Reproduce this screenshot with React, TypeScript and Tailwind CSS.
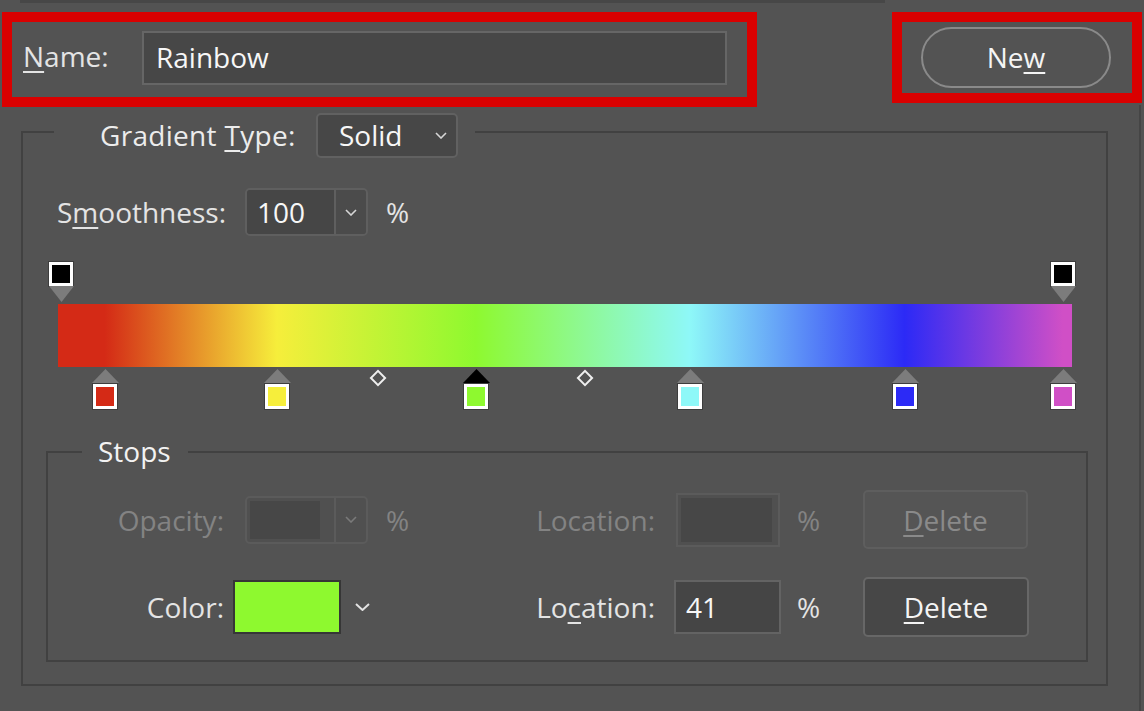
import React from "react";

function Chevron({ w = 12, h = 7, sw = 1.6, color = "#d6d6d6" }: { w?: number; h?: number; sw?: number; color?: string }) {
  return (
    <svg width={w} height={h} viewBox={`0 0 ${w} ${h}`}>
      <polyline points={`1,1 ${w / 2},${h - 1} ${w - 1},1`} fill="none" stroke={color} strokeWidth={sw} />
    </svg>
  );
}

const topStops = [12, 1014];
const bottomStops = [
  { x: 56, color: "#d42a16" },
  { x: 228, color: "#f6ee3b" },
  { x: 427, color: "#8ef92f", selected: true },
  { x: 641, color: "#8ef8f8" },
  { x: 856, color: "#2c2af6" },
  { x: 1014, color: "#d04fc6" },
];
const midpoints = [329, 536];

function U({ children }: { children: React.ReactNode }) {
  return <span className="underline decoration-2 underline-offset-[4px]">{children}</span>;
}

export default function App() {
  return (
    <div className="w-[1144px] h-[711px] bg-[#535353] overflow-hidden flex font-['Open_Sans',sans-serif] text-[28px] leading-[38px] text-[#e4e4e4]">
      <div className="w-[1139px] shrink-0 flex flex-col">
        <div className="ml-[20px] w-[865px] h-[3px] bg-[#474747] shrink-0" />

        {/* header row */}
        <div className="flex mt-[9px] shrink-0">
          <div className="ml-[2px] w-[755px] h-[95px] shrink-0 border-[10px] border-[#d90000] flex items-center pl-[11px] pb-[3px]">
            <span className="w-[119px] mb-[4px]">
              <U>N</U>ame:
            </span>
            <div className="w-[585px] h-[54px] bg-[#474747] border-2 border-[#666666] flex items-center pl-[12px] pb-[3px] text-[#f7f7f7]">
              Rainbow
            </div>
          </div>
          <div className="ml-[135px] w-[250px] h-[91px] shrink-0 border-[10px] border-[#d90000] flex items-center pl-[19px]">
            <div className="w-[190px] h-[61px] rounded-full border-2 border-[#8a8a8a] flex items-center justify-center pb-[2px] text-[#f4f4f4]">
              <span>
                Ne<U>w</U>
              </span>
            </div>
          </div>
        </div>

        {/* gradient group */}
        <fieldset className="ml-[21px] mt-[-1px] w-[1087px] border-2 border-[#414141] pb-[22px] shrink-0">
          <legend className="ml-[31px] pl-[46px] pr-[17px] pt-[7px]">
            <div className="flex items-center">
              <span className="w-[198px] text-[#ececec] tracking-[0.3px] mb-[1px]">
                Gradient <U>T</U>ype:
              </span>
              <div className="ml-[18px] w-[142px] h-[45px] bg-[#474747] border-2 border-[#616161] rounded-[5px] flex items-center justify-between pl-[21px] pr-[9px] text-[#f7f7f7]">
                <span className="mb-[2px]">Solid</span>
                <Chevron />
              </div>
            </div>
          </legend>

          {/* smoothness */}
          <div className="mt-[30px] ml-[34px] flex items-center h-[48px]">
            <span className="w-[188px]">
              S<U>m</U>oothness:
            </span>
            <div className="w-[123px] h-[48px] flex border-2 border-[#5f5f5f] rounded-[5px] overflow-hidden">
              <div className="w-[87px] bg-[#464646] flex items-center pl-[10px] text-[#f7f7f7]">100</div>
              <div className="flex-1 bg-[#4b4b4b] border-l-2 border-[#5f5f5f] flex items-center justify-center">
                <Chevron />
              </div>
            </div>
            <span className="ml-[18px]">%</span>
          </div>

          {/* gradient editor */}
          <div className="relative mt-[26px] ml-[26px] w-[1026px] h-[148px] pt-[42px] pl-[9px]">
            <div className="w-[1014px] h-[63px] bg-[linear-gradient(to_right,#d42a16_4.6%,#f6ee3b_21.6%,#8ef92f_41.2%,#8ef8f8_62.3%,#2c2af6_83.5%,#d04fc6_99.1%)]" />
            {topStops.map((x) => (
              <div key={x} className="absolute top-0 w-[25px] flex flex-col items-center" style={{ left: x - 12.5 }}>
                <div className="w-[24px] h-[24px] bg-black border-[3px] border-white ring-1 ring-[#3d3d3d]" />
                <svg width="25" height="16" viewBox="0 0 25 16">
                  <polygon points="0,0 25,0 12.5,16" fill="#7c7c7c" />
                </svg>
              </div>
            ))}
            {bottomStops.map((s) => (
              <div key={s.x} className="absolute top-[107px] w-[27px] flex flex-col items-center" style={{ left: s.x - 13.5 }}>
                <svg width="27" height="14" viewBox="0 0 27 14">
                  <polygon points="13.5,0 27,14 0,14" fill={s.selected ? "#000000" : "#7c7c7c"} />
                </svg>
                <div className="mt-[1px] w-[24px] h-[25px] border-[3px] border-white ring-1 ring-[#3d3d3d]" style={{ background: s.color }} />
              </div>
            ))}
            {midpoints.map((x) => (
              <div
                key={x}
                className="absolute top-[110px] w-[12px] h-[12px] rotate-45 border-2 border-[#efefef]"
                style={{ left: x - 6 }}
              />
            ))}
          </div>

          {/* stops group */}
          <fieldset className="mt-[22px] ml-[23px] w-[1042px] border-2 border-[#414141] pb-[23px]">
            <legend className="ml-[34px] pl-[16px] pr-[17px] h-[40px]">
              <div className="h-[40px] flex items-center pb-[2px] text-[#f2f2f2]">Stops</div>
            </legend>

            {/* row 1 (disabled) */}
            <div className="mt-[18px] h-[59px] flex items-center text-[#838383]">
              <span className="w-[176px] text-right">Opacity:</span>
              <div className="w-[286px] flex items-center">
                <div className="ml-[21px] w-[123px] h-[48px] flex border-2 border-[#5b5b5b] rounded-[5px] overflow-hidden bg-[#505050]">
                  <div className="w-[87px] p-[3px] pr-[14px]">
                    <div className="w-full h-full bg-[#474747]" />
                  </div>
                  <div className="flex-1 border-l-2 border-[#5b5b5b] flex items-center justify-center">
                    <Chevron color="#7a7a7a" />
                  </div>
                </div>
                <span className="ml-[18px]">%</span>
              </div>
              <span className="w-[145px] text-right">Location:</span>
              <div className="w-[208px] flex items-center">
                <div className="ml-[21px] w-[104px] h-[54px] border-2 border-[#5b5b5b] bg-[#505050] p-[3px] pr-[6px]">
                  <div className="w-full h-full bg-[#474747]" />
                </div>
                <span className="ml-[17px]">%</span>
              </div>
              <div className="w-[165px] h-[59px] rounded-[5px] border-2 border-[#5e5e5e] bg-[#555555] flex items-center justify-center text-[#8a8a8a]">
                <span>
                  <U>D</U>elete
                </span>
              </div>
            </div>

            {/* row 2 */}
            <div className="mt-[28px] h-[60px] flex items-center">
              <span className="w-[176px] text-right">Color:</span>
              <div className="w-[286px] flex items-center">
                <div className="ml-[9px] w-[108px] h-[54px] bg-[#8ef92f] border-2 border-[#363636]" />
                <div className="ml-[14px] flex items-center">
                  <Chevron w={15} h={8} sw={2} color="#e2e2e2" />
                </div>
              </div>
              <span className="w-[145px] text-right">
                Lo<U>c</U>ation:
              </span>
              <div className="w-[208px] flex items-center">
                <div className="ml-[19px] w-[107px] h-[54px] bg-[#454545] border-2 border-[#636363] flex items-center pl-[10px] text-[#f7f7f7]">
                  41
                </div>
                <span className="ml-[16px]">%</span>
              </div>
              <div className="w-[166px] h-[60px] rounded-[5px] border-2 border-[#676767] bg-[#474747] flex items-center justify-center text-[#f4f4f4]">
                <span>
                  <U>D</U>elete
                </span>
              </div>
            </div>
          </fieldset>
        </fieldset>
      </div>
      <div className="flex-1 pt-[105px]">
        <div className="w-[2px] h-full bg-[#454545]" />
      </div>
    </div>
  );
}
